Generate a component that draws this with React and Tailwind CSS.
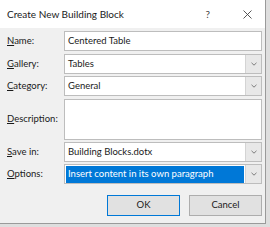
import React from "react";

function Chevron() {
  return (
    <svg width="6" height="4" viewBox="0 0 6 4" fill="none">
      <path d="M0.5 0.8 L3 3.2 L5.5 0.8" stroke="#707070" strokeWidth="0.9" />
    </svg>
  );
}

function Label({ mn, rest }) {
  return (
    <div className="w-[57px] shrink-0 text-[9.5px] text-[#1a1a1a]">
      <span className="underline underline-offset-1">{mn}</span>
      {rest}
    </div>
  );
}

function Combo({ value, selected }) {
  return (
    <div className="flex h-[20px] w-[198px] border border-[#bdbdbd] bg-white">
      <div className="flex flex-1 items-center px-px">
        <div
          className={
            selected
              ? "flex h-[17px] w-full items-center whitespace-nowrap bg-[#0078d7] px-[2px] text-[9.5px] text-white"
              : "flex h-[17px] w-full items-center whitespace-nowrap px-[2px] text-[9.5px] text-[#1a1a1a]"
          }
        >
          {value}
        </div>
      </div>
      <div className="flex w-[16px] items-center justify-center border-l border-[#d4d4d4] bg-[#e8e8e8]">
        <Chevron />
      </div>
    </div>
  );
}

function App() {
  return (
    <div
      className="h-[227px] w-[270px] overflow-hidden bg-[#dedede]"
      style={{ fontFamily: "Lato, 'Noto Sans', sans-serif" }}
    >
      <div className="h-[224px] w-[266px] border-r border-b border-[#9a9a9a] bg-[#f0f0f0]">
        <div className="flex h-[28px] items-center bg-white pl-[7px]">
          <span className="flex-1 text-[10px] text-[#1a1a1a]">Create New Building Block</span>
          <span className="mr-[33px] text-[10px] text-[#444]">?</span>
          <svg width="9" height="9" viewBox="0 0 9 9" className="mr-[13px]">
            <path d="M0.5 0.5 L8.5 8.5 M8.5 0.5 L0.5 8.5" stroke="#444" strokeWidth="0.9" />
          </svg>
        </div>

        <div className="pl-[7px]">
          <div className="mt-[3px] flex items-center">
            <Label mn="N" rest="ame:" />
            <div className="flex h-[20px] w-[198px] items-center border border-[#bdbdbd] bg-white px-[3px] text-[9.5px] text-[#1a1a1a]">
              Centered Table
            </div>
          </div>
          <div className="mt-[3px] flex items-center">
            <Label mn="G" rest="allery:" />
            <Combo value="Tables" />
          </div>
          <div className="mt-[2px] flex items-center">
            <Label mn="C" rest="ategory:" />
            <Combo value="General" />
          </div>
          <div className="mt-[3px] flex items-center">
            <Label mn="D" rest="escription:" />
            <div className="h-[41px] w-[198px] border border-[#bdbdbd] bg-white"></div>
          </div>
          <div className="mt-[2px] flex items-center">
            <Label mn="S" rest="ave in:" />
            <Combo value="Building Blocks.dotx" />
          </div>
          <div className="mt-[2px] flex items-center">
            <Label mn="O" rest="ptions:" />
            <Combo value="Insert content in its own paragraph" selected />
          </div>
          <div className="mt-[11px] flex justify-end gap-[9px] pr-[3px]">
            <button className="h-[21px] w-[73px] border border-[#0078d7] bg-[#e1e1e1] text-[9.5px] text-[#1a1a1a]">
              OK
            </button>
            <button className="h-[21px] w-[73px] border border-[#adadad] bg-[#e1e1e1] text-[9.5px] text-[#1a1a1a]">
              Cancel
            </button>
          </div>
        </div>
      </div>
    </div>
  );
}

export default App;
